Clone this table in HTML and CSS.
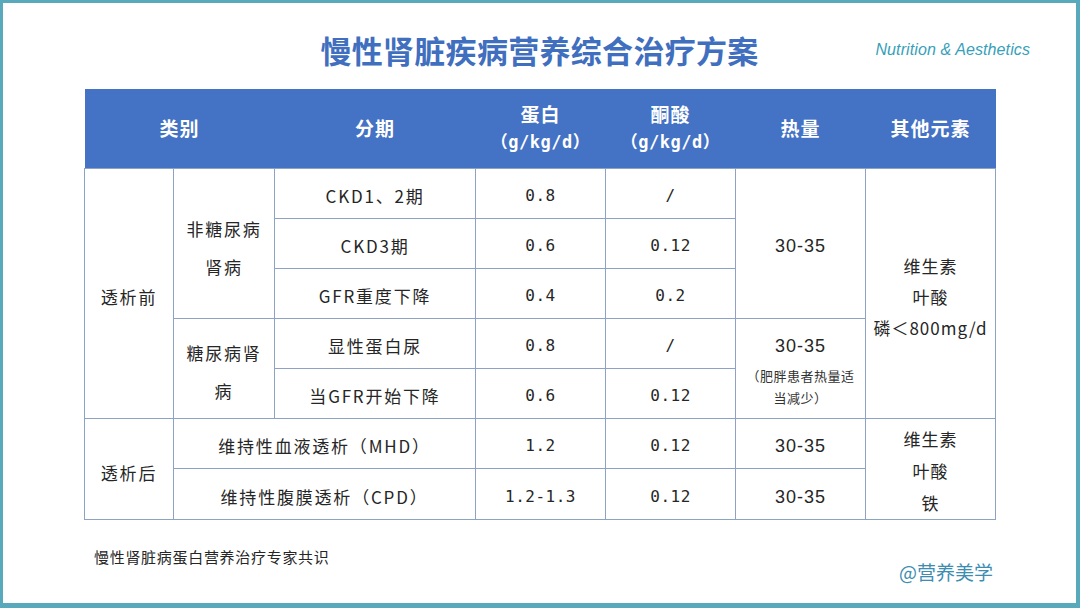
FILE: index.html
```html
<!DOCTYPE html>
<html lang="zh-CN">
<head>
<meta charset="utf-8">
<link rel="stylesheet" href="styles.css">
</head>
<body>
<div class="frame">
  <header class="top">
    <div class="spacer"></div>
    <h1 class="title">慢性肾脏疾病营养综合治疗方案</h1>
    <div class="brand-en">Nutrition &amp; Aesthetics</div>
  </header>
  <table class="plan">
    <colgroup>
      <col class="c1"><col class="c2"><col class="c3"><col class="c4"><col class="c5"><col class="c6"><col class="c7">
    </colgroup>
    <thead>
      <tr>
        <th colspan="2">类别</th>
        <th>分期</th>
        <th>蛋白<br><span class="unit">（g/kg/d）</span></th>
        <th>酮酸<br><span class="unit">（g/kg/d）</span></th>
        <th>热量</th>
        <th>其他元素</th>
      </tr>
    </thead>
    <tbody>
      <tr>
        <td rowspan="5" class="cat">透析前</td>
        <td rowspan="3" class="sub">非糖尿病<br>肾病</td>
        <td>CKD1、2期</td>
        <td class="num">0.8</td>
        <td class="num">/</td>
        <td rowspan="3" class="kcal">30-35</td>
        <td rowspan="5" class="other">维生素<br>叶酸<br>磷＜800mg/d</td>
      </tr>
      <tr>
        <td>CKD3期</td>
        <td class="num">0.6</td>
        <td class="num">0.12</td>
      </tr>
      <tr>
        <td>GFR重度下降</td>
        <td class="num">0.4</td>
        <td class="num">0.2</td>
      </tr>
      <tr>
        <td rowspan="2" class="sub2">糖尿病肾<br>病</td>
        <td>显性蛋白尿</td>
        <td class="num">0.8</td>
        <td class="num">/</td>
        <td rowspan="2" class="kcal note-cell"><div class="kv">30-35</div><div class="note">（肥胖患者热量适<br>当减少）</div></td>
      </tr>
      <tr>
        <td>当GFR开始下降</td>
        <td class="num">0.6</td>
        <td class="num">0.12</td>
      </tr>
      <tr>
        <td rowspan="2" class="cat">透析后</td>
        <td colspan="2">维持性血液透析（MHD）</td>
        <td class="num">1.2</td>
        <td class="num">0.12</td>
        <td class="kcal">30-35</td>
        <td rowspan="2" class="other2">维生素<br>叶酸<br>铁</td>
      </tr>
      <tr class="last">
        <td colspan="2">维持性腹膜透析（CPD）</td>
        <td class="num">1.2-1.3</td>
        <td class="num">0.12</td>
        <td class="kcal">30-35</td>
      </tr>
    </tbody>
  </table>
  <footer class="foot">
    <div class="source">慢性肾脏病蛋白营养治疗专家共识</div>
    <div class="brand-cn">@营养美学</div>
  </footer>
</div>
</body>
</html>
```

FILE: styles.css
```css
* { box-sizing: border-box; }
html, body {
  margin: 0;
  padding: 0;
  width: 1080px;
  height: 608px;
  overflow: hidden;
  background: #ffffff;
}
body {
  font-family: "Noto Sans CJK SC", "Noto Sans", sans-serif;
  color: #262626;
}
.frame {
  width: 1080px;
  height: 608px;
  border-style: solid;
  border-color: #58a9bb;
  border-width: 3px 4px 5px 3px;
  background: #ffffff;
  display: flex;
  flex-direction: column;
}
.top {
  height: 86px;
  padding-top: 7px;
  display: grid;
  grid-template-columns: 1fr auto 1fr;
  align-items: center;
}
.title {
  margin: 0;
  font-size: 31px;
  line-height: 40px;
  font-weight: 700;
  color: #3f6fbe;
  letter-spacing: 0.3px;
}
.brand-en {
  justify-self: end;
  margin-right: 46px;
  font-family: "Liberation Sans", Arial, sans-serif;
  font-style: italic;
  font-size: 16px;
  color: #37a0b9;
  letter-spacing: 0.1px;
}
.plan {
  margin-left: 81px;
  width: 912px;
  border-collapse: collapse;
  table-layout: fixed;
}
.c1 { width: 89px; }
.c2 { width: 101px; }
.c3 { width: 201px; }
.c4, .c5, .c6, .c7 { width: 130px; }
.plan th {
  background: #4472c4;
  color: #ffffff;
  font-weight: 700;
  font-size: 19px;
  letter-spacing: 1px;
  line-height: 26px;
  height: 79px;
  padding: 0;
  text-align: center;
  vertical-align: middle;
}
.plan th .unit {
  font-family: "DejaVu Sans Mono", "Liberation Mono", "Noto Sans CJK SC", monospace;
  font-size: 17px;
  letter-spacing: 0.5px;
}
.plan td {
  border: 1px solid #8ea3c3;
  height: 50px;
  padding: 6px 0 0 0;
  text-align: center;
  vertical-align: middle;
  font-size: 17px;
  letter-spacing: 1.8px;
  line-height: 22px;
  color: #262626;
}
.plan tr.last td { height: 51px; }
.plan td.num {
  font-family: "DejaVu Sans Mono", "Liberation Mono", monospace;
  font-size: 16px;
  letter-spacing: 0.5px;
}
.plan td.kcal {
  font-family: "Liberation Sans", Arial, sans-serif;
  font-size: 18px;
  letter-spacing: 1px;
}
.plan td.sub {
  line-height: 38px;
  padding-top: 10px;
  padding-bottom: 0;
}
.plan td.sub2 {
  line-height: 38px;
  padding-top: 8px;
}
.plan td.cat {
  padding-top: 8px;
}
.plan td.note-cell {
  padding-top: 6px;
}
.kv {
  line-height: 26px;
  margin-bottom: 6px;
}
.note {
  font-family: "Noto Sans CJK SC", sans-serif;
  font-size: 13px;
  letter-spacing: 0.5px;
  line-height: 22px;
  color: #333333;
}
.plan td.other {
  line-height: 31px;
  letter-spacing: 1px;
  padding-top: 6px;
}
.plan td.other2 {
  line-height: 32px;
  letter-spacing: 1px;
  padding-top: 4px;
}
.foot {
  display: flex;
  justify-content: space-between;
  align-items: flex-start;
  padding: 0 83px 0 91px;
}
.source {
  margin-top: 27px;
  font-size: 15px;
  letter-spacing: 0.7px;
  line-height: 20px;
  color: #262626;
}
.brand-cn {
  margin-top: 40px;
  font-size: 19px;
  line-height: 24px;
  color: #3d8db0;
}
```
